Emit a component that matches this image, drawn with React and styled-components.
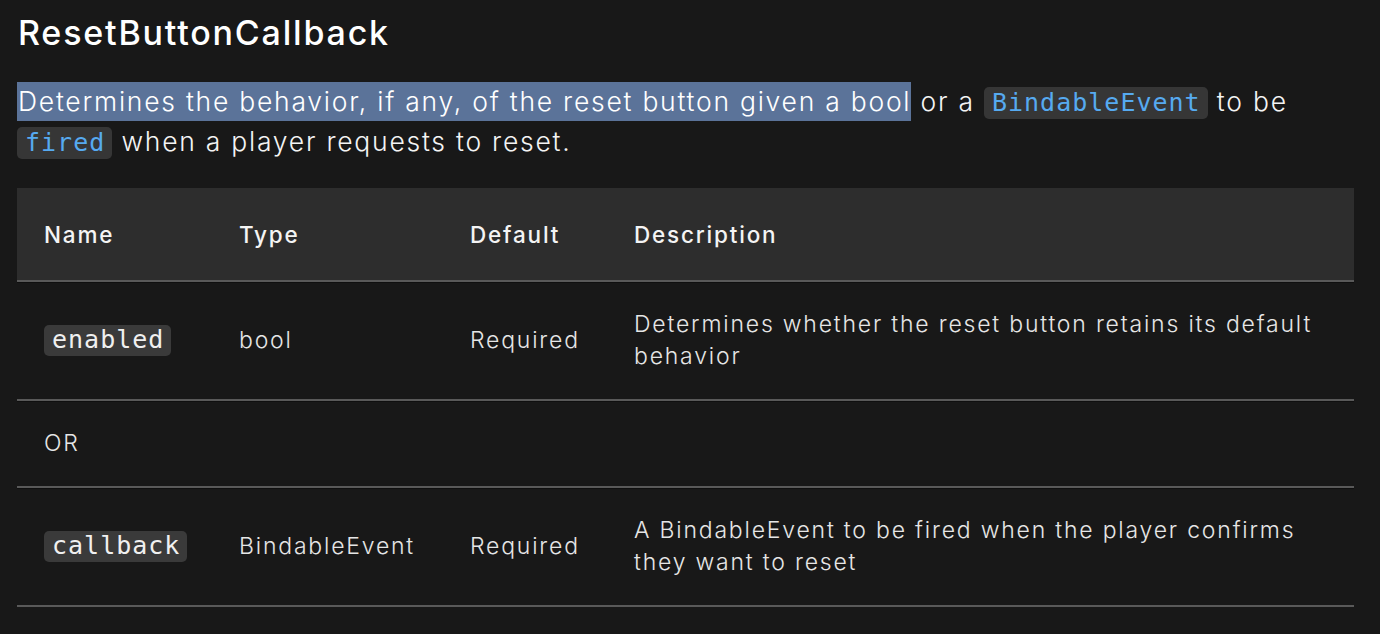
import React from "react";
import styled, { createGlobalStyle } from "styled-components";

const Global = createGlobalStyle`
  html, body { margin: 0; padding: 0; background: #181818; }
  body { font-family: Inter, "Open Sans", sans-serif; color: #f2f2f2; }
`;

const Page = styled.main`
  padding: 13px 26px 0 17px;
  width: 1337px;
`;

const Title = styled.h2`
  margin: 0 0 0 1px;
  font-size: 34px;
  font-weight: 500;
  line-height: 40px;
  letter-spacing: 1.8px;
  color: #ffffff;
`;

const Lead = styled.p`
  margin: 28px 0 0 0;
  font-size: 26.5px;
  font-weight: 300;
  line-height: 40px;
  letter-spacing: 1.75px;
  color: #f4f4f4;
`;

const Selected = styled.span`
  background: #5b7399;
  color: #ffffff;
  padding: 3px 0 4px 1px;
`;

const Code = styled.code`
  font-family: "DejaVu Sans Mono", monospace;
  font-size: 25px;
  letter-spacing: 1px;
  background: ${(p) => (p.$link ? "#363636" : "#3a3a3a")};
  color: ${(p) => (p.$link ? "#56aaf0" : "#f0f0f0")};
  border-radius: 5px;
  padding: 1px 7px 2px 8px;
  line-height: 28px;
`;

const Table = styled.div`
  margin-top: 27px;
  display: grid;
  grid-template-columns: 195px 231px 164px 1fr;
`;

const Row = styled.div`
  display: contents;
`;

const Cell = styled.div`
  padding: ${(p) => (p.$head ? "31px 20px 29px 27px" : "26px 20px 27px 27px")};
  background: ${(p) => (p.$head ? "#2d2d2d" : "transparent")};
  border-bottom: 2px solid #595959;
  box-shadow: 0 1px 0 #0f0f0f;
  font-size: ${(p) => (p.$head ? "22.5px" : "23px")};
  font-weight: ${(p) => (p.$head ? 500 : 300)};
  letter-spacing: 1.8px;
  line-height: 32px;
  color: ${(p) => (p.$head ? "#f4f4f4" : "#e6e6e6")};
  display: flex;
  align-items: center;
  grid-column: ${(p) => (p.$span ? "1 / -1" : "auto")};
`;

const rows = [
  { name: "enabled", type: "bool", def: "Required", desc: "Determines whether the reset button retains its default behavior" },
  { or: true },
  { name: "callback", type: "BindableEvent", def: "Required", desc: "A BindableEvent to be fired when the player confirms they want to reset" },
];

export default function App() {
  return (
    <Page>
      <Global />
      <Title>ResetButtonCallback</Title>
      <Lead>
        <Selected>Determines the behavior, if any, of the reset button given a bool</Selected> or a{" "}
        <Code $link>BindableEvent</Code> to be <Code $link>fired</Code> when a player requests to reset.
      </Lead>
      <Table>
        <Row>
          <Cell $head>Name</Cell>
          <Cell $head>Type</Cell>
          <Cell $head>Default</Cell>
          <Cell $head>Description</Cell>
        </Row>
        {rows.map((r, i) =>
          r.or ? (
            <Row key={i}>
              <Cell $span>OR</Cell>
            </Row>
          ) : (
            <Row key={i}>
              <Cell>
                <Code>{r.name}</Code>
              </Cell>
              <Cell>{r.type}</Cell>
              <Cell>{r.def}</Cell>
              <Cell>{r.desc}</Cell>
            </Row>
          )
        )}
      </Table>
    </Page>
  );
}
